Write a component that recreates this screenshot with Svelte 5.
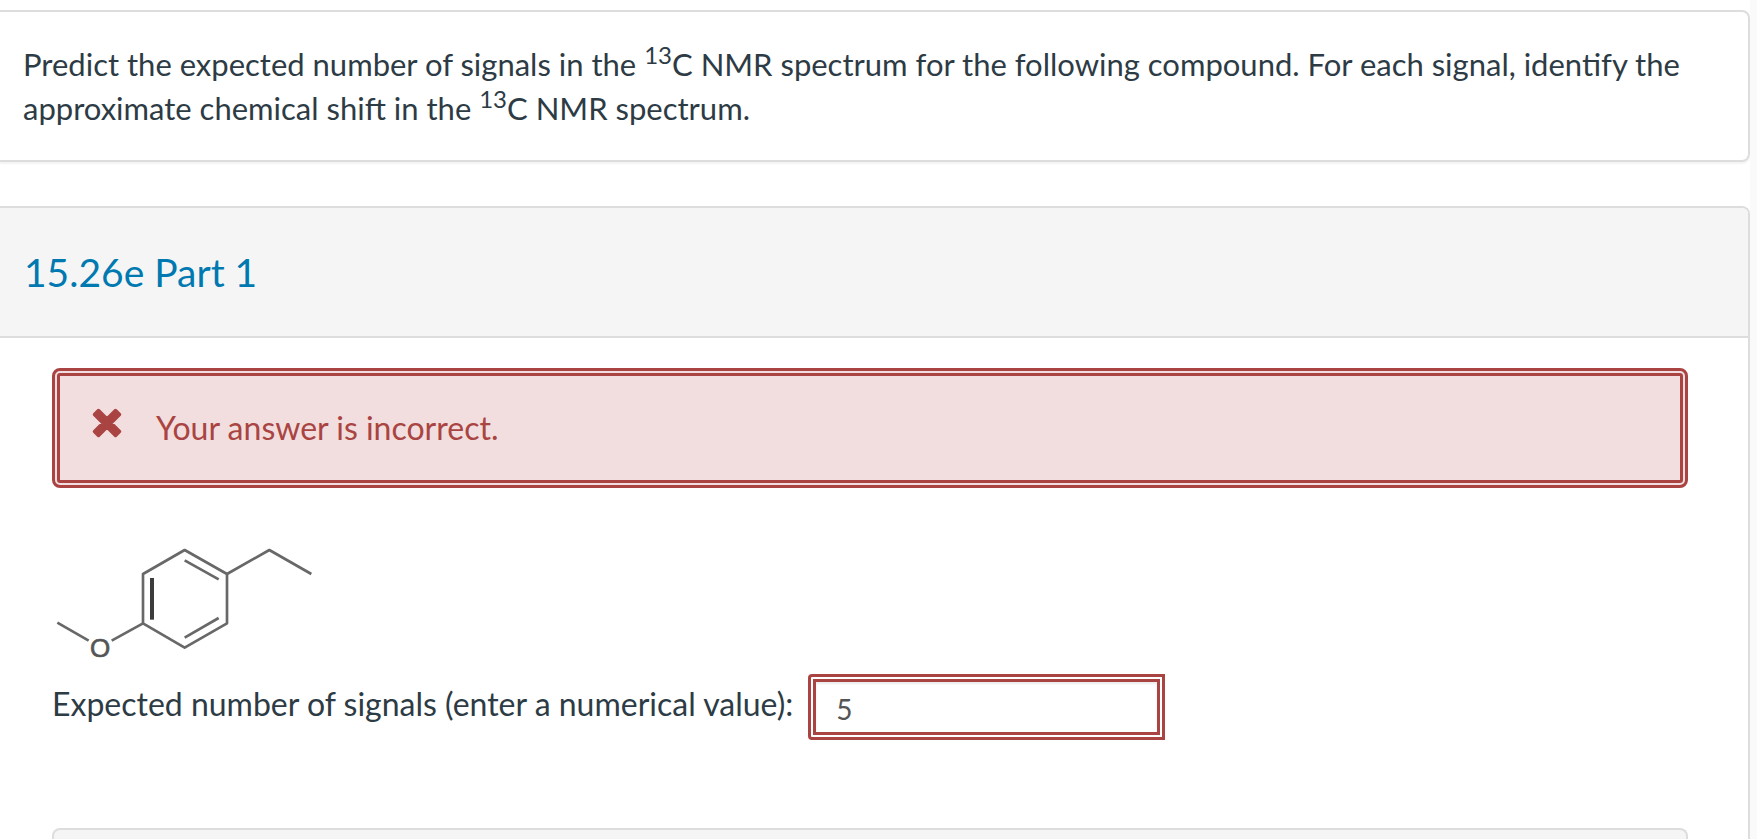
<script>
  let signals = '5';
  const incorrect = true;
</script>

<svelte:head>
  <title>15.26e Part 1</title>
</svelte:head>

<div class="page">
  <section class="question-card">
    <p>
      Predict the expected number of signals in the <sup>13</sup>C NMR spectrum for the following compound. For each signal, identify the approximate chemical shift in the <sup>13</sup>C NMR spectrum.
    </p>
  </section>

  <section class="part">
    <header class="part-header">
      <h2>15.26e Part 1</h2>
    </header>

    <div class="part-body">
      {#if incorrect}
        <div class="alert" role="alert">
          <svg class="alert-icon" viewBox="0 0 30 30" aria-hidden="true">
            <path
              d="M6.5 2.5 L15 11 L23.5 2.5 L27.5 6.5 L19 15 L27.5 23.5 L23.5 27.5 L15 19 L6.5 27.5 L2.5 23.5 L11 15 L2.5 6.5 Z"
              fill="currentColor"
              stroke="currentColor"
              stroke-width="3.5"
              stroke-linejoin="round"
            />
          </svg>
          <span>Your answer is incorrect.</span>
        </div>
      {/if}

      <!-- 1-ethyl-4-methoxybenzene -->
      <svg class="molecule" viewBox="0 0 810 336" role="img" aria-label="Structure of the compound">
        <g fill="none" stroke="#686868" stroke-width="8" stroke-linejoin="round">
          <path d="M398 6 L525 78 V226 L398 299 L273 226 V78 Z" />
          <path d="M525 78 L652 6 L778 78" />
          <path d="M398 37 L500 94" />
          <path d="M398 269 L500 210" />
          <path d="M273 226 L179 278" />
          <path d="M16 224 L110 278" />
        </g>
        <path d="M300 90 V215" stroke="#3c3c3c" stroke-width="12" />
        <text x="144" y="326" text-anchor="middle">O</text>
      </svg>

      <div class="answer-row">
        <label for="signals">Expected number of signals (enter a numerical value):</label>
        <input id="signals" type="text" class:incorrect bind:value={signals} />
      </div>

      <div class="sub-panel"></div>
    </div>
  </section>
</div>

<style>
  :global(body) {
    margin: 0;
    background: #fafafa;
  }

  .page {
    --border: #dddddd;
    --error: #a94442;
    --text: #2d3b45;
    box-sizing: border-box;
    display: flex;
    flex-direction: column;
    gap: 44px;
    height: 100vh;
    margin-right: 7px;
    padding-top: 10px;
    overflow: hidden;
    background: #fff;
    color: var(--text);
    font-family: Lato, sans-serif;
    font-size: 32px;
    line-height: 44px;
  }

  .question-card {
    padding: 30px 23px;
    border: 2px solid var(--border);
    border-left: none;
    border-radius: 0 8px 8px 0;
    box-shadow: 0 2px 2px rgba(0, 0, 0, 0.05);
    font-size: 31px;
  }

  p {
    margin: 0;
  }

  sup {
    position: relative;
    top: -12px;
    font-size: 24px;
    line-height: 0;
    vertical-align: baseline;
  }

  .part {
    display: flex;
    flex: 1;
    flex-direction: column;
    border: 2px solid var(--border);
    border-width: 2px 2px 0 0;
    border-radius: 0 8px 0 0;
  }

  .part-header {
    padding: 42px 24px;
    border-bottom: 2px solid var(--border);
    border-radius: 0 6px 0 0;
    background: #f5f5f5;
  }

  h2 {
    margin: 0;
    color: #0079b1;
    font-size: 39px;
    font-weight: 400;
    line-height: 44px;
  }

  .part-body {
    display: flex;
    flex: 1;
    flex-direction: column;
    padding: 30px 60px 0 52px;
  }

  .alert {
    display: flex;
    align-items: center;
    gap: 34px;
    padding: 30px 32px;
    border: 8px double var(--error);
    border-radius: 8px;
    background: #f2dede;
    color: var(--error);
  }

  .alert-icon {
    width: 30px;
    height: 30px;
    margin-bottom: 10px;
  }

  .molecule {
    width: 270px;
    height: 112px;
    margin-top: 60px;
    overflow: visible;
  }

  .molecule text {
    fill: #555;
    stroke: #555;
    stroke-width: 2;
    font-family: 'Liberation Sans', Arial, sans-serif;
    font-size: 78px;
  }

  .answer-row {
    display: flex;
    align-items: center;
    gap: 15px;
    margin-top: 14px;
  }

  label {
    padding-bottom: 6px;
  }

  input {
    box-sizing: border-box;
    width: 357px;
    height: 66px;
    padding: 4px 20px 0;
    border: 2px solid var(--border);
    border-radius: 4px 0 0 4px;
    outline: none;
    background: #fff;
    box-shadow: inset 0 2px 2px rgba(0, 0, 0, 0.075);
    color: #555;
    font-family: Lato, sans-serif;
    font-size: 28px;
  }

  input.incorrect {
    border: 8px double var(--error);
  }

  .sub-panel {
    flex: 1;
    margin-top: 88px;
    border: 2px solid var(--border);
    border-bottom: none;
    border-radius: 8px 8px 0 0;
    background: #f5f5f5;
  }
</style>
